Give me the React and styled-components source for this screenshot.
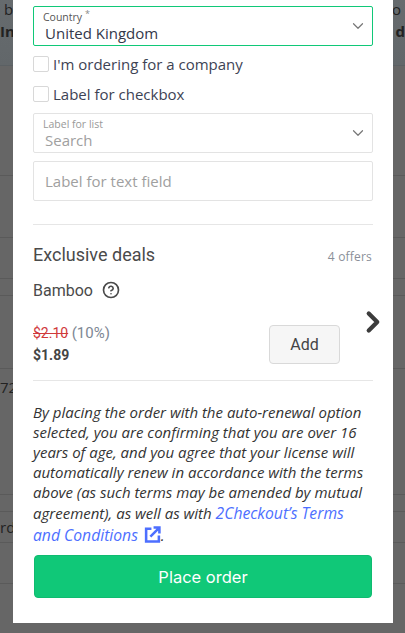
import React from 'react'
import styled, { createGlobalStyle } from 'styled-components'
import { ChevronDown, ChevronRight, CircleHelp } from 'lucide-react'

const Global = createGlobalStyle`
  html, body {
    margin: 0;
    height: 100%;
    overflow: hidden;
    background: #666;
  }
  * { box-sizing: border-box; }
`

const Page = styled.div`
  position: relative;
  height: 633px;
  overflow: hidden;
`

/* dimmed table behind the modal */
const Backdrop = styled.div`
  display: flex;
  flex-direction: column;
  background: #666;
  color: #222;
  font: 14px "Open Sans", sans-serif;
`
const BgRow = styled.div`
  height: ${p => p.$h}px;
  border-bottom: 1px solid ${p => p.$light ? '#5b6063' : '#5a5a5a'};
  background: ${p => p.$light ? 'linear-gradient(#666b6e, #62676a)' : '#666'};
  padding-top: ${p => p.$pad || 0}px;
`
const BgLine = styled.div`
  display: flex;
  justify-content: space-between;
  height: ${p => p.$h}px;
  line-height: ${p => p.$h}px;
  font-weight: ${p => p.$bold ? 700 : 400};
`
const BgText = styled.span`
  font-size: 15px;
  white-space: nowrap;
`

const Modal = styled.div`
  position: absolute;
  left: 13px;
  top: 0;
  width: 380px;
  height: 623px;
  background: #fff;
  padding: 6px 20px 0;
  display: flex;
  flex-direction: column;
  color: #444;
  font-family: "Open Sans", sans-serif;
`

const Field = styled.div`
  position: relative;
  height: 40px;
  border: 1px solid ${p => p.$active ? '#10c878' : '#e3e3e3'};
  border-radius: 2px;
  margin-bottom: ${p => p.$mb || 0}px;
  padding: ${p => p.$center ? 0 : 4}px 5px 0 9px;
  display: flex;
  align-items: ${p => p.$center ? 'center' : 'stretch'};
`
const FieldBody = styled.div`
  flex: 1;
  display: flex;
  flex-direction: column;
`
const FieldLabel = styled.span`
  font-size: 10.5px;
  line-height: 12px;
  color: ${p => p.$muted ? '#999' : '#555'};
`
const Star = styled.sup`
  font-size: 9px;
  line-height: 0;
  margin-left: 3px;
  color: #888;
`
const FieldValue = styled.span`
  font-size: 15px;
  line-height: 20px;
  padding-left: 2px;
  color: ${p => p.$muted ? '#a0a0a0' : '#33384a'};
`
const Arrow = styled(ChevronDown)`
  align-self: center;
  margin: -4px 0 0 0;
  color: #777;
`

const CheckRow = styled.label`
  display: flex;
  align-items: center;
  gap: 4px;
  height: 16px;
  margin-bottom: ${p => p.$mb}px;
  font-size: 15px;
  color: #3d4354;
`
const Box = styled.span`
  width: 16px;
  height: 16px;
  border: 1px solid #d8d8d8;
  border-radius: 2px;
`

const Rule = styled.hr`
  border: 0;
  border-top: 1px solid #e6e6e6;
  margin: ${p => p.$top}px 0 0;
  width: 100%;
`

const DealsHead = styled.div`
  display: flex;
  justify-content: space-between;
  align-items: baseline;
  margin-top: 19px;
  line-height: 22px;
`
const DealsTitle = styled.span`
  font: 18px "Roboto", sans-serif;
  color: #4a4a4a;
`
const OfferCount = styled.span`
  font-size: 12px;
  letter-spacing: 0.2px;
  color: #8a8f98;
  padding-right: 1px;
`
const DealName = styled.div`
  display: flex;
  align-items: center;
  gap: 9px;
  margin-top: 11px;
  height: 22px;
  font: 16px "Roboto", sans-serif;
  color: #4a4a4a;
`
const DealRow = styled.div`
  position: relative;
  display: flex;
  justify-content: space-between;
  align-items: center;
  margin-top: 21px;
  padding-right: 33px;
`
const Prices = styled.div`
  display: flex;
  flex-direction: column;
  font: 14px/22px "Roboto", sans-serif;
`
const OldPrice = styled.s`
  color: #d0393b;
`
const Percent = styled.span`
  color: #7d8794;
  font-size: 15px;
`
const NewPrice = styled.b`
  color: #444;
`
const AddButton = styled.button`
  width: 71px;
  height: 39px;
  background: #f6f6f6;
  border: 1px solid #d9d9d9;
  border-radius: 4px;
  font: 16px "Roboto", sans-serif;
  color: #444;
`
const NextIcon = styled(ChevronRight)`
  position: absolute;
  right: -17px;
  top: -17px;
  color: #3c3c3c;
`

const Terms = styled.p`
  margin: 21px 0 0;
  font-size: 15px;
  line-height: 20px;
  font-style: italic;
  color: #333;
`
const TermsLink = styled.a`
  color: #4d6fff;
  font-size: 15.7px;
  line-height: 22px;
`
const ExternalIcon = styled.svg`
  display: inline-block;
  width: 17px;
  height: 17px;
  vertical-align: -2px;
  margin-left: 2px;
`

const PlaceOrder = styled.button`
  width: 338px;
  height: 43px;
  margin: 9px 0 0 1px;
  background: #10c878;
  border: 1px solid #0fbb70;
  border-radius: 4px;
  color: #fff;
  font: 16.5px "Inter", sans-serif;
`

export default function App() {
  return (
    <Page>
      <Global />
      <Backdrop>
        <BgRow $h={66} $light>
          <BgLine $h={18}><BgText>&nbsp;b</BgText><BgText>fo&nbsp;</BgText></BgLine>
          <BgLine $h={26} $bold><BgText>In</BgText><BgText>n d</BgText></BgLine>
        </BgRow>
        <BgRow $h={110} />
        <BgRow $h={62} />
        <BgRow $h={41} />
        <BgRow $h={17} />
        <BgRow $h={73} />
        <BgRow $h={126} $pad={8}>
          <BgLine $h={20}><BgText>72</BgText></BgLine>
        </BgRow>
        <BgRow $h={17} />
        <BgRow $h={31} $pad={5}>
          <BgLine $h={20}><BgText>rd</BgText></BgLine>
        </BgRow>
        <BgRow $h={41} />
      </Backdrop>

      <Modal>
        <Field $active $mb={10}>
          <FieldBody>
            <FieldLabel>Country<Star>*</Star></FieldLabel>
            <FieldValue>United Kingdom</FieldValue>
          </FieldBody>
          <Arrow size={18} strokeWidth={1.6} />
        </Field>
        <CheckRow $mb={14}><Box />I'm ordering for a company</CheckRow>
        <CheckRow $mb={11}><Box />Label for checkbox</CheckRow>
        <Field $mb={8}>
          <FieldBody>
            <FieldLabel $muted>Label for list</FieldLabel>
            <FieldValue $muted>Search</FieldValue>
          </FieldBody>
          <Arrow size={18} strokeWidth={1.6} />
        </Field>
        <Field $center>
          <FieldValue $muted>Label for text field</FieldValue>
        </Field>
        <Rule $top={23} />
        <DealsHead>
          <DealsTitle>Exclusive deals</DealsTitle>
          <OfferCount>4 offers</OfferCount>
        </DealsHead>
        <DealName>Bamboo <CircleHelp size={18} strokeWidth={2.2} /></DealName>
        <DealRow>
          <Prices>
            <span><OldPrice>$2.10</OldPrice> <Percent>(10%)</Percent></span>
            <NewPrice>$1.89</NewPrice>
          </Prices>
          <AddButton>Add</AddButton>
          <NextIcon size={34} strokeWidth={3} />
        </DealRow>
        <Rule $top={14} />
        <Terms>
          By placing the order with the auto-renewal option selected, you are confirming that you are over 16 years of age, and you agree that your license will automatically renew in accordance with the terms above (as such terms may be amended by mutual agreement), as well as with{' '}
          <TermsLink>2Checkout’s Terms and Conditions</TermsLink>{' '}
          <ExternalIcon viewBox="0 0 16 16" fill="none" stroke="#4d6fff" strokeWidth="2.4">
            <path d="M7 2.500H2v12h12V9" />
            <path d="M6 10l8-8M9 1.500h5.500V7" />
          </ExternalIcon>.
        </Terms>
        <PlaceOrder>Place order</PlaceOrder>
      </Modal>
    </Page>
  )
}
